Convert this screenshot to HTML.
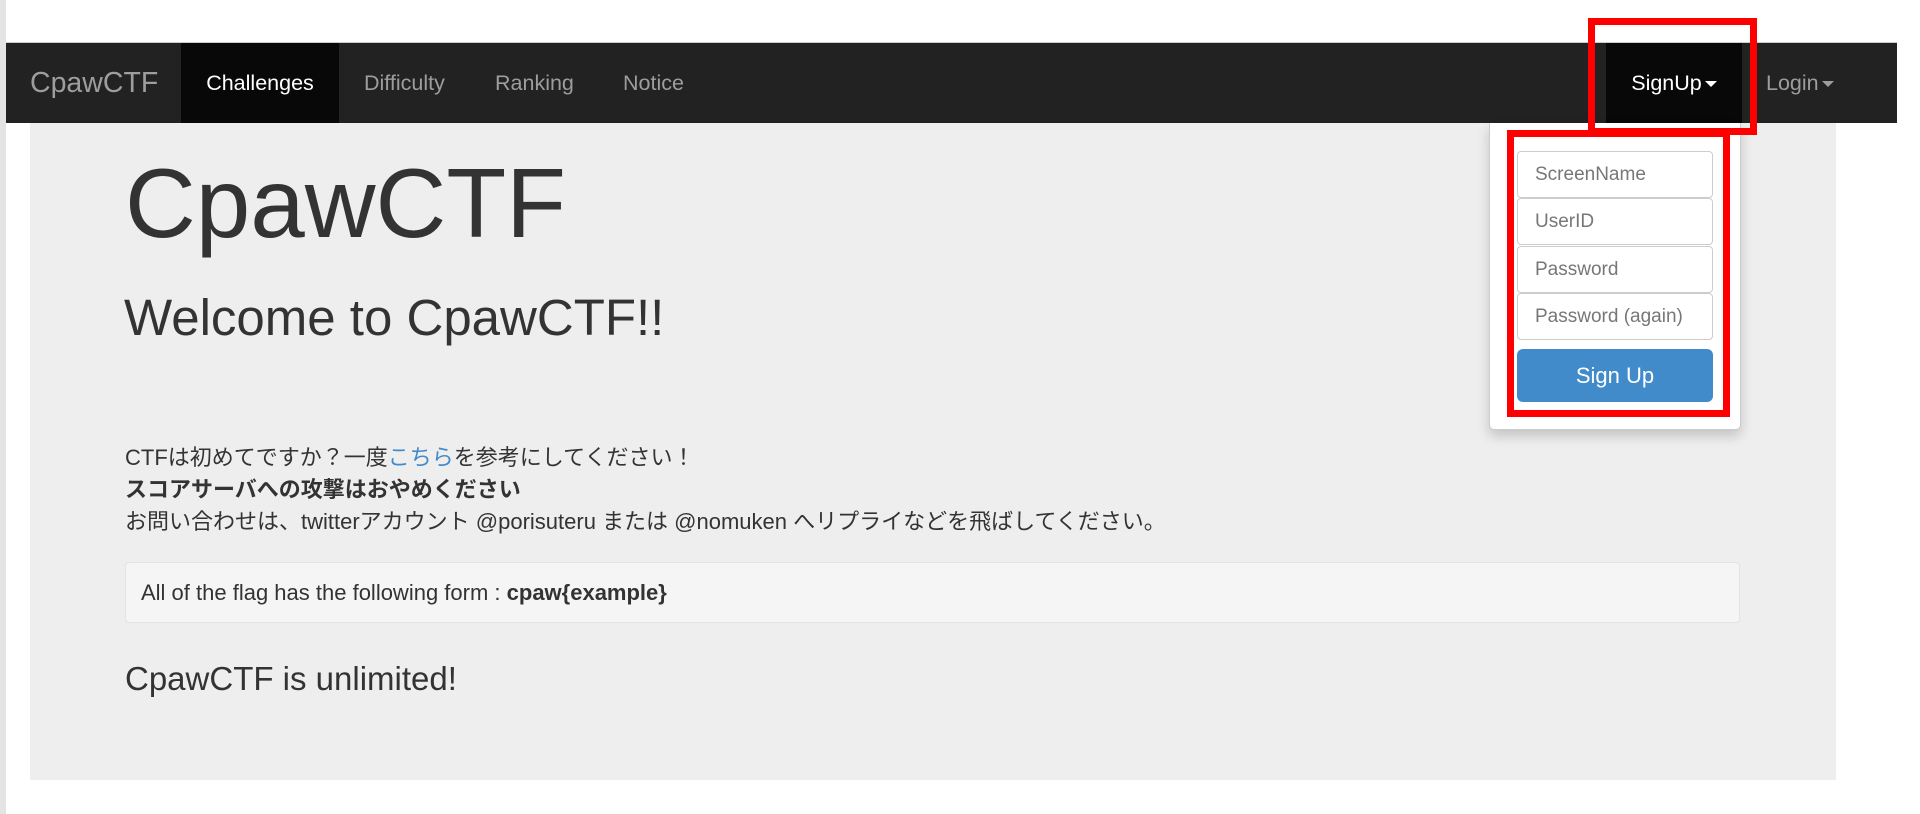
<!DOCTYPE html>
<html><head><meta charset="utf-8"><style>
*{box-sizing:border-box;margin:0;padding:0}
body{width:1920px;height:814px;background:#fff;font-family:"Liberation Sans","Noto Sans CJK JP",sans-serif;color:#333;position:relative;overflow:hidden}
.abs{position:absolute}
.strip{left:0;top:0;width:6px;height:814px;background:#e4e4e4}
.nav{left:6px;top:42px;width:1891px;height:81px;background:#222;border-top:1px solid #ccc}
.nav a{position:absolute;top:0;height:80px;line-height:80px;font-size:21.5px;color:#9d9d9d;text-decoration:none;white-space:nowrap}
.gray{left:30px;top:123px;width:1806px;height:657px;background:#eee}
.caret{display:inline-block;width:0;height:0;border-left:6px solid transparent;border-right:6px solid transparent;border-top:6px solid currentColor;vertical-align:middle;margin-left:3px}
.dd{left:1489px;top:123px;width:252px;height:307px;background:#fff;border:1px solid #ccc;border-top:none;border-radius:0 0 5px 5px;box-shadow:0 6px 12px rgba(0,0,0,.18)}
.inp{position:absolute;left:1517px;width:196px;height:47px;border:1px solid #ccc;border-radius:4px;background:#fff;font-size:19px;color:#777;padding-left:17px;line-height:45px}
.btn{left:1517px;top:349px;width:196px;height:53px;background:#428bca;border-radius:6px;color:#fff;font-size:22px;text-align:center;line-height:53px}
.red{border:7px solid #f00}
p.t{font-size:22px;line-height:32px}
</style></head><body>
<div class="abs strip"></div>
<div class="abs gray"></div>
<div class="abs nav">
<a style="left:0;width:175px;padding-left:24px;font-size:28.5px">CpawCTF</a>
<a style="left:175px;width:158px;background:#080808;color:#fff;text-align:center">Challenges</a>
<a style="left:358px">Difficulty</a>
<a style="left:489px">Ranking</a>
<a style="left:617px">Notice</a>
<a style="left:1600px;width:136px;background:#080808;color:#fff;text-align:center">SignUp<span class="caret"></span></a>
<a style="left:1760px">Login<span class="caret"></span></a>
</div>
<div class="abs dd"></div>
<div class="inp" style="top:151px">ScreenName</div>
<div class="inp" style="top:198px">UserID</div>
<div class="inp" style="top:246px">Password</div>
<div class="inp" style="top:293px">Password (again)</div>
<div class="abs btn">Sign Up</div>
<div class="abs red" style="left:1588px;top:18px;width:169px;height:117px"></div>
<div class="abs red" style="left:1507px;top:130px;width:223px;height:287px"></div>
<div class="abs" style="left:125px;top:148px;font-size:98px;line-height:110px">CpawCTF</div>
<div class="abs" style="left:124px;top:288px;font-size:51px;line-height:60px">Welcome to CpawCTF!!</div>
<div class="abs" style="left:125px;top:442px;white-space:nowrap">
<p class="t">CTFは初めてですか？一度<span style="color:#428bca">こちら</span>を参考にしてください！</p>
<p class="t" style="font-weight:bold">スコアサーバへの攻撃はおやめください</p>
<p class="t">お問い合わせは、twitterアカウント @porisuteru または @nomuken へリプライなどを飛ばしてください。</p>
</div>
<div class="abs" style="left:125px;top:562px;width:1615px;height:61px;background:#f5f5f5;border:1px solid #e3e3e3;border-radius:4px;font-size:22px;line-height:59px;padding-left:15px">All of the flag has the following form : <b>cpaw{example}</b></div>
<div class="abs" style="left:125px;top:658px;font-size:33px;line-height:42px">CpawCTF is unlimited!</div>
</body></html>
